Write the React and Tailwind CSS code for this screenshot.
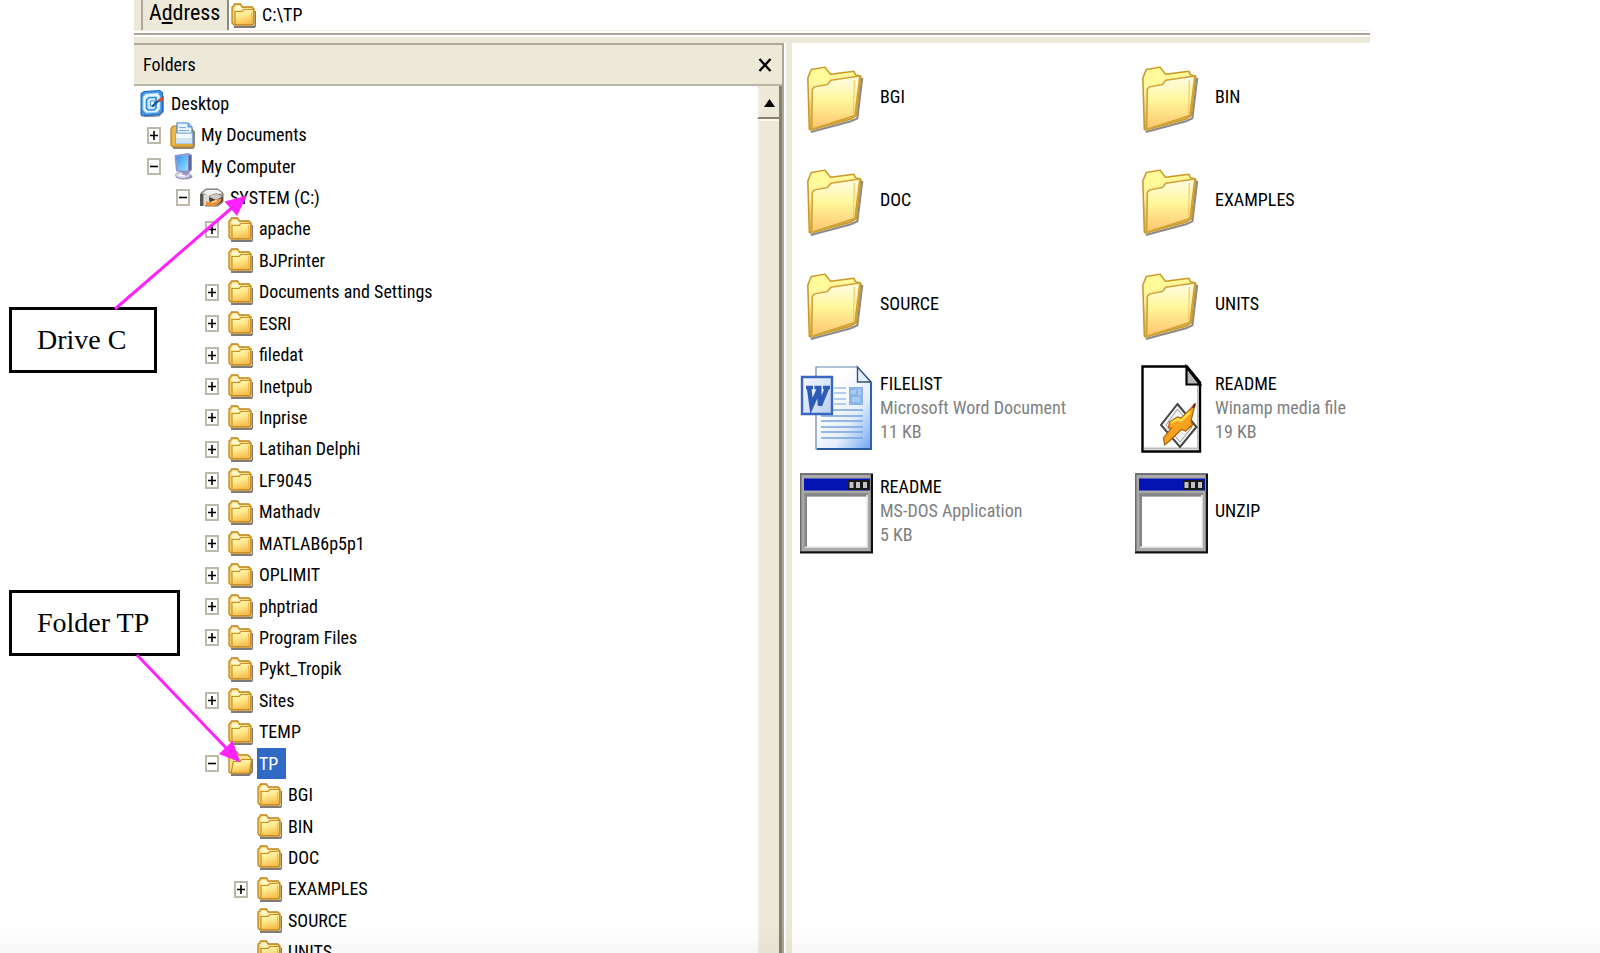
import React from 'react';

const treeItems = [
  { level: 0, icon: 'desktop', label: 'Desktop' },
  { level: 1, icon: 'documents', label: 'My Documents', state: 'closed' },
  { level: 1, icon: 'computer', label: 'My Computer', state: 'open' },
  { level: 2, icon: 'drive', label: 'SYSTEM (C:)', state: 'open' },
  { level: 3, icon: 'folder', label: 'apache', state: 'closed' },
  { level: 3, icon: 'folder', label: 'BJPrinter' },
  { level: 3, icon: 'folder', label: 'Documents and Settings', state: 'closed' },
  { level: 3, icon: 'folder', label: 'ESRI', state: 'closed' },
  { level: 3, icon: 'folder', label: 'filedat', state: 'closed' },
  { level: 3, icon: 'folder', label: 'Inetpub', state: 'closed' },
  { level: 3, icon: 'folder', label: 'Inprise', state: 'closed' },
  { level: 3, icon: 'folder', label: 'Latihan Delphi', state: 'closed' },
  { level: 3, icon: 'folder', label: 'LF9045', state: 'closed' },
  { level: 3, icon: 'folder', label: 'Mathadv', state: 'closed' },
  { level: 3, icon: 'folder', label: 'MATLAB6p5p1', state: 'closed' },
  { level: 3, icon: 'folder', label: 'OPLIMIT', state: 'closed' },
  { level: 3, icon: 'folder', label: 'phptriad', state: 'closed' },
  { level: 3, icon: 'folder', label: 'Program Files', state: 'closed' },
  { level: 3, icon: 'folder', label: 'Pykt_Tropik' },
  { level: 3, icon: 'folder', label: 'Sites', state: 'closed' },
  { level: 3, icon: 'folder', label: 'TEMP' },
  { level: 3, icon: 'folderOpen', label: 'TP', state: 'open', selected: true },
  { level: 4, icon: 'folder', label: 'BGI' },
  { level: 4, icon: 'folder', label: 'BIN' },
  { level: 4, icon: 'folder', label: 'DOC' },
  { level: 4, icon: 'folder', label: 'EXAMPLES', state: 'closed' },
  { level: 4, icon: 'folder', label: 'SOURCE' },
  { level: 4, icon: 'folder', label: 'UNITS' },
];

const files = [
  { icon: 'folder', name: 'BGI' },
  { icon: 'folder', name: 'BIN' },
  { icon: 'folder', name: 'DOC' },
  { icon: 'folder', name: 'EXAMPLES' },
  { icon: 'folder', name: 'SOURCE' },
  { icon: 'folder', name: 'UNITS' },
  { icon: 'word', name: 'FILELIST', type: 'Microsoft Word Document', size: '11 KB' },
  { icon: 'winamp', name: 'README', type: 'Winamp media file', size: '19 KB' },
  { icon: 'dos', name: 'README', type: 'MS-DOS Application', size: '5 KB' },
  { icon: 'dos', name: 'UNZIP' },
];

const indent = ['pl-[6px]', 'pl-[13px]', 'pl-[42px]', 'pl-[71px]', 'pl-[100px]'];

// Gradients shared by all icons
const IconDefs = () => (
  <svg className="absolute" width="0" height="0" aria-hidden="true">
    <defs>
      <linearGradient id="gFolder" x1="0" y1="0" x2="0.3" y2="1">
        <stop offset="0" stopColor="#fff9c4" />
        <stop offset="0.5" stopColor="#ffe98a" />
        <stop offset="1" stopColor="#f7bf52" />
      </linearGradient>
      <linearGradient id="gBig" x1="0" y1="0" x2="0" y2="1">
        <stop offset="0" stopColor="#fffde6" />
        <stop offset="0.45" stopColor="#fff79c" />
        <stop offset="1" stopColor="#fdc46c" />
      </linearGradient>
      <linearGradient id="gBack" x1="0" y1="0" x2="0" y2="1">
        <stop offset="0" stopColor="#fff894" />
        <stop offset="0.4" stopColor="#fff3a8" />
        <stop offset="1" stopColor="#e0a020" />
      </linearGradient>
      <linearGradient id="gScreen" x1="0" y1="0" x2="1" y2="1">
        <stop offset="0" stopColor="#3f8cf0" />
        <stop offset="1" stopColor="#8fe4ff" />
      </linearGradient>
      <linearGradient id="gPage" x1="0" y1="0" x2="1" y2="1">
        <stop offset="0.3" stopColor="#ffffff" />
        <stop offset="0.65" stopColor="#e4eefc" />
        <stop offset="1" stopColor="#6ea6f2" />
      </linearGradient>
      <linearGradient id="gWord" x1="0" y1="0" x2="1" y2="1">
        <stop offset="0" stopColor="#f8fbff" />
        <stop offset="1" stopColor="#b9cdf3" />
      </linearGradient>
    </defs>
  </svg>
);

const SmallIcon = ({ name }) => (
  <svg width="25" height="27" viewBox="0 0 25 27" className="shrink-0" aria-hidden="true">
    {name === 'folder' && (
      <>
        <path d="M3 25h20.500l1.200-2V9" fill="none" stroke="#5f5a54" strokeWidth="1.800" opacity="0.8" />
        <path d="M1 21V5l1.500-1 1-2h6l2 3h9.500l2 2v14l-1 2H3z" fill="#f6cf63" stroke="#bf861c" strokeWidth="1.300" />
        <path d="M3.500 6l1.500-2.500h4l2 3h8.500v2H3.500z" fill="#fff8cf" />
        <path d="M4 22.500V9.500h7l2-2h9.500v13.500l-1 1.500z" fill="url(#gFolder)" stroke="#cb8f22" strokeWidth="1.200" />
        <path d="M20.500 9.500v11.500" stroke="#f3bc4f" strokeWidth="1" />
      </>
    )}
    {name === 'folderOpen' && (
      <>
        <path d="M3 25h18l3.500-4V9" fill="none" stroke="#5f5a54" strokeWidth="1.800" opacity="0.8" />
        <path d="M1 22V5l2-3h6l2 3h9l2 2 1.500 3v9l-2 4H3z" fill="#fbe48a" stroke="#bf861c" strokeWidth="1.300" />
        <path d="M3 23L5.500 11.500H12l2-2h9.500L21.500 22l-1 1z" fill="url(#gFolder)" stroke="#c58a1e" strokeWidth="1.200" />
      </>
    )}
    {name === 'desktop' && (
      <>
        <path d="M4 26.500l15-1 4-4V6" fill="none" stroke="#5d626e" strokeWidth="2" opacity="0.7" />
        <path d="M1 3.500L4 1.500 20 .500l2.500 2V21l-3 3.500L2 26l-1-1z" fill="#3d93e6" stroke="#1f66bd" strokeWidth="1" />
        <path d="M5.500 4L18 3l2 3.500v12.500L17 22.500 6 23 3 20V7z" fill="#e6f5ff" stroke="#8cc6f4" strokeWidth="0.800" />
        <path d="M9 7.500h7v10.500l-2 2H8l-1.500-2v-8z" fill="#cfeafc" stroke="#2c8be0" strokeWidth="1.700" />
        <path d="M10.500 11h4v5h-4z" fill="#fff" stroke="#3c8fda" strokeWidth="1" />
        <path d="M12 16.500l8-7" stroke="#1c4f8f" strokeWidth="2.200" />
        <path d="M19.500 10.500l3-2" stroke="#dd4d24" strokeWidth="3" strokeLinecap="round" />
      </>
    )}
    {name === 'documents' && (
      <>
        <path d="M3 26h20l1.500-2V9" fill="none" stroke="#5f5a54" strokeWidth="1.800" opacity="0.7" />
        <path d="M1 23V7l2-3h6l2 3h11l1.500 2v14l-2 2H3z" fill="#eebb48" stroke="#b27d1b" strokeWidth="1.200" />
        <path d="M7 1h11l4 4v11H7z" fill="#e8f5ff" stroke="#3f86da" strokeWidth="1.200" />
        <path d="M18 1v4h4" fill="#8fc6f4" stroke="#4c8fd8" strokeWidth="1" />
        <path d="M9 5.500h7M9 8.500h10" stroke="#6fb4ee" strokeWidth="1.200" />
        <path d="M5.500 11h17v11h-17z" fill="#cfe3f5" stroke="#87aace" strokeWidth="1" />
        <path d="M6.500 12h15v4h-15z" fill="#f4faff" />
        <path d="M4 22h18v2H4z" fill="#e2a938" />
      </>
    )}
    {name === 'computer' && (
      <>
        <ellipse cx="14" cy="23.500" rx="8.500" ry="3" fill="#8f8fb0" />
        <ellipse cx="13" cy="22" rx="7.500" ry="3.500" fill="#d6d6ea" stroke="#9a9abd" strokeWidth="0.800" />
        <path d="M11 17l7-1 .5 6-5 1z" fill="#9a9bc6" />
        <path d="M5 2.500L18.500.500l3 1.500V17L19 19.500 6.500 18z" fill="#9fa7d4" stroke="#7c84b8" strokeWidth="0.800" />
        <path d="M6 3.500L18 2v15L7.500 17z" fill="url(#gScreen)" />
        <path d="M18.500 2l2.500.500V16.500l-2.500 2z" fill="#5c64a0" />
        <path d="M9 22l6 1" stroke="#fff" strokeWidth="1.600" />
      </>
    )}
    {name === 'drive' && (
      <>
        <path d="M2 9l5-4h12l5 4v9l-5 4H7l-5-3z" fill="#a9a6a2" stroke="#77736f" strokeWidth="1" />
        <path d="M4 8.500l4-2.500h11l4 3-5 2H8z" fill="#f2f2f0" />
        <path d="M1 10h3v12H1z" fill="#595653" />
        <path d="M5 11h5v10H5z" fill="#dddbd8" />
        <ellipse cx="17" cy="15" rx="7" ry="5.500" fill="#4b3f3c" />
        <path d="M10.500 13c1-4 11-4 12.500 0l-6 3z" fill="#d0cac4" />
        <path d="M7 17.500l5 1 5-3 6-1-2 4-7 4-7-1.500z" fill="#f08c32" />
        <path d="M12 18.500l6-2" stroke="#ffd29a" strokeWidth="1.500" />
      </>
    )}
  </svg>
);

const LargeIcon = ({ name }) => (
  <svg width="73" height="90" viewBox="0 0 73 90" className="shrink-0" aria-hidden="true">
    {name === 'folder' && (
      <g transform="translate(0 1.500) scale(0.98 0.94)">
        <path d="M11 83.500l41-11.500 6.500-3L63.500 26" fill="none" stroke="#3f3c36" strokeWidth="2.200" opacity="0.6" />
        <path d="M8 26l3.500-9 14-2.500 5.500 7.500 24-3 1.500 3.500 5.500 1.500-4.500 42-6 4L11 81.500l-1.500-1z" fill="url(#gBack)" stroke="#c99a2a" strokeWidth="1.600" strokeLinejoin="round" />
        <path d="M9.500 27l3-8.500 12.500-2 5.500 8-4 6-14 2-2.500 3z" fill="#fffa9a" />
        <path d="M12.500 38l2.500-2.500 13-2.500 3.500-4.500L61 24 56 66 12 80.500z" fill="url(#gBig)" stroke="#d2a238" strokeWidth="1.600" strokeLinejoin="round" />
        <path d="M55.500 28L54.500 65" stroke="#f4cc74" strokeWidth="1.300" />
      </g>
    )}
    {name === 'word' && (
      <>
        <path d="M16 4h41.500L71 19v67H16z" fill="url(#gPage)" stroke="#5f86b4" strokeWidth="1.200" />
        <path d="M17 86h54V20" fill="none" stroke="#285aa0" strokeWidth="1.800" />
        <path d="M57.500 4v15H71z" fill="#e4eefa" stroke="#2c517f" strokeWidth="1.400" />
        <path d="M34 25h12M34 30h12M34 36h12M34 41h12" stroke="#9fc0ea" strokeWidth="1.600" />
        <path d="M21 47h42M21 53h42M21 58h42M21 64h42M21 69h42M21 75h42" stroke="#79a3dc" strokeWidth="1.600" />
        <path d="M49 24h14v18H49z" fill="#8bb4e8" />
        <path d="M51 27h5v4h-5zM58 26h3v6h-3zM52 34h8v5h-8z" fill="#a9c9f0" />
        <path d="M2 14h30v37H2z" fill="url(#gWord)" stroke="#3b66c0" strokeWidth="2.400" />
        <path d="M9 24.500L11.500 43 19 26l1 16.500L27.500 24" fill="none" stroke="#2f5bb8" strokeWidth="4.500" />
        <path d="M6 24.500h7M14.500 24.500h7M23 24.500h7" stroke="#2f5bb8" strokeWidth="3.500" />
      </>
    )}
    {name === 'winamp' && (
      <>
        <path d="M7.500 3.500H52l13 16V88.500H7.500z" fill="#fff" stroke="#000" strokeWidth="2.400" />
        <path d="M9 85.500h54V22" fill="none" stroke="#bdbdbd" strokeWidth="2" />
        <path d="M51.500 4v17.500H65z" fill="#b9b9b9" stroke="#000" strokeWidth="2.200" />
        <path d="M42.500 41L61.500 64 45 84 26 62z" fill="#f4f4f4" stroke="#444" strokeWidth="2" />
        <path d="M42.500 46L57 64 45 79 31 62z" fill="none" stroke="#9a9a9a" strokeWidth="1" />
        <path d="M60 41L56 58l1.500 4-7 6-4-1.500-12 11.500-5 4-1-7 8-10h-3l1-6 8-5 4 1z" fill="#f7a11c" stroke="#a86413" strokeWidth="1.200" />
        <path d="M36 60l7-4 3 2 9-9" fill="none" stroke="#ffde4a" strokeWidth="2.500" />
        <path d="M58 45l2-4" stroke="#7c2b10" strokeWidth="2.500" />
      </>
    )}
    {name === 'dos' && (
      <>
        <path d="M0 7.500h73v80H0z" fill="#101010" />
        <path d="M0 7.500h71v78H0z" fill="#6c6c6c" />
        <path d="M1.500 9h69v76h-69z" fill="#a9a9a9" />
        <path d="M4 12.500h66v12H4z" fill="#0414b4" />
        <path d="M48 14h21v10H48z" fill="#1a1a1a" />
        <path d="M49.500 16h4v6h-4zM56 16h4v6h-4zM63 16h4v6h-4z" fill="#c4c4c4" />
        <path d="M4 27h64v3H4z" fill="#8a8a8a" />
        <path d="M5 29h63v53H5z" fill="#dedede" />
        <path d="M4.500 28.500H66v2H7v50H4.500z" fill="#858585" />
        <path d="M7 31h59.500v49.500H7z" fill="#fff" />
      </>
    )}
  </svg>
);

const Expander = ({ state, label }) => (
  <button
    type="button"
    aria-label={`${state === 'open' ? 'Collapse' : 'Expand'} ${label}`}
    className="flex h-[17px] w-[14px] shrink-0 items-center justify-center border-2 border-[#bdb9a9] bg-white"
  >
    <svg width="8" height="9" viewBox="0 0 8 9" aria-hidden="true">
      <path d={state === 'open' ? 'M0 4.500h8' : 'M0 4.500h8M4 0v9'} stroke="#000" strokeWidth="1.600" />
    </svg>
  </button>
);

const TreeRow = ({ item }) => (
  <li className={`flex items-center ${indent[item.level]}`}>
    {item.level > 0 && (
      <span className="mr-[9px] flex w-[14px] shrink-0">
        {item.state && <Expander state={item.state} label={item.label} />}
      </span>
    )}
    <SmallIcon name={item.icon} />
    <a
      href="#"
      className={`ml-1 flex h-full items-center whitespace-nowrap pl-0.5 pr-2 ${item.selected ? 'bg-[#316ac5] text-white' : 'text-black'}`}
    >
      {item.label}
    </a>
  </li>
);

const AddressBar = () => (
  <div className="flex h-[31px] border-b border-[#f1efe2] bg-white">
    <div className="flex w-[95px] shrink-0 items-center border-r-2 border-[#8f8b7c] bg-[#ece9d8] pl-[7px]">
      <span className="h-full border-r-2 border-[#aca899]" />
      <label htmlFor="address" className="pb-1 pl-1.5 text-[22px] leading-[26px]">
        A<u className="underline-offset-2">d</u>dress
      </label>
    </div>
    <div className="flex flex-1 items-center gap-1 pl-[2px]">
      <SmallIcon name="folder" />
      <input
        id="address"
        type="text"
        defaultValue="C:\TP"
        className="w-full min-w-0 bg-transparent pl-[2px] outline-none"
      />
    </div>
  </div>
);

const FoldersPane = () => (
  <section className="flex w-[650px] shrink-0 flex-col border-r-2 border-t-2 border-[#aca899] bg-white">
    <header className="flex h-[41px] shrink-0 items-center justify-between border-b-2 border-[#bab6a5] bg-[#ece9d8] px-[9px]">
      <h2>Folders</h2>
      <button type="button" aria-label="Close" className="p-px">
        <svg width="14" height="14" viewBox="0 0 14 14" aria-hidden="true">
          <path d="M1.500 1l11 12M12.500 1l-11 12" stroke="#000" strokeWidth="2.400" />
        </svg>
      </button>
    </header>
    <div className="flex min-h-0 flex-1 overflow-hidden">
      <ul className="mt-[2px] grid h-[880px] flex-1 auto-rows-fr">
        {treeItems.map((item, i) => (
          <TreeRow key={i} item={item} />
        ))}
      </ul>
      {/* Scrollbar */}
      <div className="flex w-[25px] shrink-0 flex-col border-r-3 border-[#85826f] bg-[#ece9d8]">
        <button
          type="button"
          aria-label="Scroll up"
          className="mt-[2px] flex h-[31px] items-center justify-center border-b-2 border-l-2 border-b-[#85826f] border-l-[#f8f7f0]"
        >
          <svg width="11" height="8" viewBox="0 0 11 8" aria-hidden="true">
            <path d="M5.500 0L11 8H0z" fill="#000" />
          </svg>
        </button>
        <div className="flex-1 border-l-2 border-t-2 border-[#f8f7f0]" />
      </div>
    </div>
  </section>
);

const FilesPane = () => (
  <main className="min-w-0 flex-1 bg-white pl-2 pt-[2px]">
    <ul className="grid h-[518px] auto-rows-fr grid-cols-[335px_1fr]">
      {files.map((file, i) => (
        <li key={i}>
          <a href="#" className="flex h-full items-center gap-[7px] whitespace-nowrap">
            <LargeIcon name={file.icon} />
            <span className="flex flex-col leading-6">
              <span>{file.name}</span>
              {file.type && <span className="text-[#808080]">{file.type}</span>}
              {file.size && <span className="text-[#808080]">{file.size}</span>}
            </span>
          </a>
        </li>
      ))}
    </ul>
  </main>
);

const Callout = ({ className, children }) => (
  <div
    className={`absolute left-[9px] flex h-[66px] items-center border-3 border-black bg-white pl-[25px] pr-[28px] font-['Liberation_Serif',serif] text-[28px] ${className}`}
  >
    {children}
  </div>
);

const App = () => {
  return (
    <div className="relative flex h-screen flex-col overflow-hidden bg-white pl-[134px] pr-[230px] font-['Roboto_Condensed','Roboto',sans-serif] text-[18px] leading-6 text-black">
      <IconDefs />
      <AddressBar />
      <div className="mt-[2px] h-[2px] shrink-0 bg-[#aca899]" />
      <div className="mt-[2px] h-[6px] shrink-0 bg-[#ece9d8]" />
      <div className="flex min-h-0 flex-1">
        <FoldersPane />
        <div className="w-2 shrink-0 border-l-2 border-white bg-[#ece9d8]" />
        <FilesPane />
      </div>

      {/* Annotations over the window */}
      <Callout className="top-[307px]">Drive C</Callout>
      <Callout className="top-[590px]">Folder TP</Callout>
      <svg className="pointer-events-none absolute left-0 top-0" width="300" height="800" viewBox="0 0 300 800" aria-hidden="true">
        <g stroke="#ff22ff" strokeWidth="3">
          <path d="M115 309L234 206" />
          <path d="M137 655L229 751" />
        </g>
        <path d="M247 195.500l-22.500 6 12.500 14.500zM240.500 762.500l-21.500-8.500 13.500-13z" fill="#ff22ff" />
      </svg>
      <div className="pointer-events-none absolute inset-x-0 bottom-0 h-[30px] bg-gradient-to-b from-transparent to-black/3" />
    </div>
  );
};

export default App;
